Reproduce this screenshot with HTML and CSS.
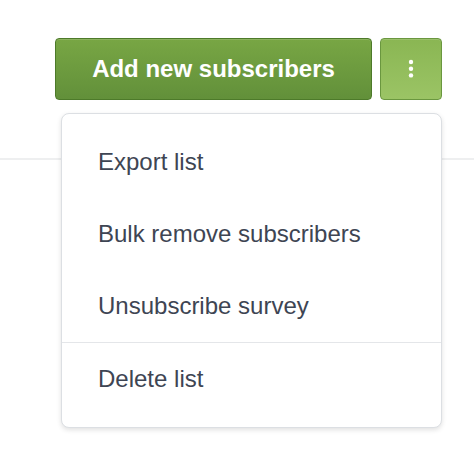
FILE: index.html
```html
<!DOCTYPE html>
<html>
<head>
<meta charset="utf-8">
<link rel="stylesheet" href="styles.css">
</head>
<body>
<div class="page">
<div class="header">
  <div class="actions">
    <button class="btn btn-primary">Add new subscribers</button>
    <button class="btn btn-more" aria-label="More actions">
      <svg width="8" height="20" viewBox="0 0 8 20"><circle cx="4" cy="3" r="2.2" fill="#fff"/><circle cx="4" cy="9.7" r="2.2" fill="#fff"/><circle cx="4" cy="16.4" r="2.2" fill="#fff"/></svg>
    </button>
    <div class="menu">
      <div class="menu-section">
        <div class="menu-item">Export list</div>
        <div class="menu-item">Bulk remove subscribers</div>
        <div class="menu-item">Unsubscribe survey</div>
      </div>
      <div class="menu-section">
        <div class="menu-item">Delete list</div>
      </div>
    </div>
  </div>
</div>
</div>
</body>
</html>
```
FILE: styles.css
```css
html, body {
  margin: 0;
  padding: 0;
  background: #ffffff;
  font-family: "Liberation Sans", Arial, sans-serif;
}
.page {
  min-height: 468px;
  position: relative;
}
.header {
  height: 160px;
  box-sizing: border-box;
  padding: 38px 32px 0 0;
  border-bottom: 2px solid #eeeff0;
  display: flex;
  justify-content: flex-end;
  align-items: flex-start;
}
.actions {
  position: relative;
  display: flex;
  gap: 8px;
}
.btn {
  height: 62px;
  border-radius: 4px;
  font-family: "Liberation Sans", Arial, sans-serif;
  color: #ffffff;
  cursor: pointer;
  padding: 0;
  display: flex;
  align-items: center;
  justify-content: center;
}
.btn-primary {
  width: 317px;
  font-size: 24px;
  font-weight: bold;
  border: 1px solid #4d7a2a;
  background: linear-gradient(#78a644, #62903a);
  box-shadow: inset 0 1px 0 rgba(255,255,255,0.15);
}
.btn-more {
  width: 62px;
  border: 1px solid #6a973f;
  background: linear-gradient(#8ab653, #9bc465);
  box-shadow: inset 0 1px 0 rgba(255,255,255,0.15);
}
.menu {
  position: absolute;
  z-index: 10;
  top: 75px;
  right: 0;
  width: 381px;
  box-sizing: border-box;
  background: #ffffff;
  border: 1px solid #dcdfe3;
  border-radius: 8px;
  box-shadow: 0 2px 5px rgba(0,0,0,0.12);
}
.menu-section {
  padding: 12px 0 0;
}
.menu-section + .menu-section {
  border-top: 1px solid #e4e6e9;
  padding: 0 0 12px;
}
.menu-item {
  height: 72px;
  display: flex;
  align-items: center;
  padding-left: 36px;
  font-size: 24px;
  color: #3e4553;
}
```
